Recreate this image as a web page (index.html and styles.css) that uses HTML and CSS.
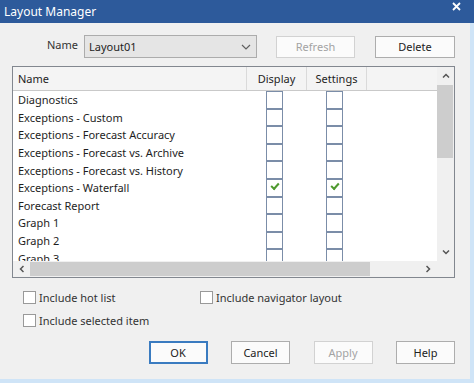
FILE: index.html
```html
<!DOCTYPE html>
<html lang="en">
<head>
    <meta charset="UTF-8">
    <title>Layout Manager</title>
    <link rel="stylesheet" href="styles.css">
</head>
<body>
    <div class="window">
        <div class="titlebar">
            <span class="title">Layout Manager</span>
            <svg class="close" width="9" height="9" viewBox="0 0 9 9">
                <path d="M1 1 L8 8 M8 1 L1 8" stroke="#fff" stroke-width="1.8"/>
            </svg>
        </div>
        <div class="content">
            <div class="top-row">
                <label class="name-label">Name</label>
                <div class="combo">
                    <span>Layout01</span>
                    <svg width="10" height="6" viewBox="0 0 10 6">
                        <path d="M1 1 L5 5 L9 1" fill="none" stroke="#606060" stroke-width="1.2"/>
                    </svg>
                </div>
                <button class="btn btn-refresh" disabled>Refresh</button>
                <button class="btn btn-delete">Delete</button>
            </div>

            <div class="list">
                <div class="list-view">
                    <div class="list-header">
                        <div class="col-name">Name</div>
                        <div class="col-check">Display</div>
                        <div class="col-check">Settings</div>
                        <div class="col-rest"></div>
                    </div>
                    <div class="row"><div class="col-name">Diagnostics</div><div class="col-check"><span class="box"></span></div><div class="col-check"><span class="box"></span></div></div>
                    <div class="row"><div class="col-name">Exceptions - Custom</div><div class="col-check"><span class="box"></span></div><div class="col-check"><span class="box"></span></div></div>
                    <div class="row"><div class="col-name">Exceptions - Forecast Accuracy</div><div class="col-check"><span class="box"></span></div><div class="col-check"><span class="box"></span></div></div>
                    <div class="row"><div class="col-name">Exceptions - Forecast vs. Archive</div><div class="col-check"><span class="box"></span></div><div class="col-check"><span class="box"></span></div></div>
                    <div class="row"><div class="col-name">Exceptions - Forecast vs. History</div><div class="col-check"><span class="box"></span></div><div class="col-check"><span class="box"></span></div></div>
                    <div class="row"><div class="col-name">Exceptions - Waterfall</div><div class="col-check"><span class="box checked"></span></div><div class="col-check"><span class="box checked"></span></div></div>
                    <div class="row"><div class="col-name">Forecast Report</div><div class="col-check"><span class="box"></span></div><div class="col-check"><span class="box"></span></div></div>
                    <div class="row"><div class="col-name">Graph 1</div><div class="col-check"><span class="box"></span></div><div class="col-check"><span class="box"></span></div></div>
                    <div class="row"><div class="col-name">Graph 2</div><div class="col-check"><span class="box"></span></div><div class="col-check"><span class="box"></span></div></div>
                    <div class="row"><div class="col-name">Graph 3</div><div class="col-check"><span class="box"></span></div><div class="col-check"><span class="box"></span></div></div>
                </div>
                <div class="vscroll">
                    <div class="arrow">
                        <svg width="8" height="5" viewBox="0 0 8 5"><path d="M1 4.5 L4 1.5 L7 4.5" fill="none" stroke="#555" stroke-width="1.5"/></svg>
                    </div>
                    <div class="vtrack"><div class="vthumb"></div></div>
                    <div class="arrow">
                        <svg width="8" height="5" viewBox="0 0 8 5"><path d="M1 0.5 L4 3.5 L7 0.5" fill="none" stroke="#555" stroke-width="1.5"/></svg>
                    </div>
                </div>
                <div class="hscroll">
                    <div class="arrow">
                        <svg width="5" height="8" viewBox="0 0 5 8"><path d="M4.5 1 L1.5 4 L4.5 7" fill="none" stroke="#555" stroke-width="1.5"/></svg>
                    </div>
                    <div class="htrack"><div class="hthumb"></div></div>
                    <div class="arrow">
                        <svg width="5" height="8" viewBox="0 0 5 8"><path d="M0.5 1 L3.5 4 L0.5 7" fill="none" stroke="#555" stroke-width="1.5"/></svg>
                    </div>
                </div>
                <div class="corner"></div>
            </div>

            <div class="options">
                <label class="option"><span class="small-box"></span>Include hot list</label>
                <label class="option"><span class="small-box"></span>Include navigator layout</label>
                <label class="option"><span class="small-box"></span>Include selected item</label>
            </div>

            <div class="buttons">
                <button class="btn btn-default">OK</button>
                <button class="btn">Cancel</button>
                <button class="btn" disabled>Apply</button>
                <button class="btn">Help</button>
            </div>
        </div>
    </div>
</body>
</html>
```

FILE: styles.css
```css
body {
    margin: 0;
    padding: 0;
    background-color: #cfe4f7;
    font-family: "Noto Sans", "Open Sans", sans-serif;
    font-size: 11px;
    color: #1e1e1e;
}

.window {
    width: 474px;
    height: 383px;
    display: flex;
    flex-direction: column;
}

.titlebar {
    height: 23px;
    background-color: #2d5a9b;
    display: flex;
    align-items: center;
    justify-content: space-between;
    padding: 0 13px 0 4px;
    flex-shrink: 0;
}

.title {
    color: #ffffff;
    font-size: 12px;
}

.close {
    align-self: flex-start;
    margin-top: 2px;
}

.content {
    flex: 1;
    background-color: #f0f0f0;
    margin: 0 4px 4px 0;
    padding: 12px 0 0 12px;
}

.top-row {
    display: flex;
    align-items: center;
    height: 23px;
}

.name-label {
    width: 72px;
    padding-right: 6px;
    box-sizing: border-box;
    text-align: right;
    color: #333;
    position: relative;
    top: -2px;
}

.combo {
    width: 173px;
    height: 23px;
    box-sizing: border-box;
    background-color: #e5e5e5;
    border: 1px solid #acacac;
    display: flex;
    align-items: center;
    justify-content: space-between;
    padding: 0 5px 0 4px;
    margin-right: 19px;
}

.btn {
    width: 59px;
    height: 23px;
    box-sizing: border-box;
    background-color: #fbfbfb;
    border: 1px solid #adadad;
    font-family: "Noto Sans", "Open Sans", sans-serif;
    font-size: 11px;
    color: #222;
    padding: 0;
}

.btn:disabled {
    border-color: #d2d2d2;
    color: #a3a3a3;
}

.btn-refresh {
    width: 79px;
    height: 22px;
    margin-right: 20px;
}

.btn-delete {
    width: 80px;
    height: 22px;
}

.btn-default {
    border: 1px solid #3a7bc0;
    box-shadow: inset 0 0 0 1px #3a7bc0;
}

.list {
    width: 443px;
    height: 212px;
    box-sizing: border-box;
    margin-top: 8px;
    border: 1px solid #82878f;
    background-color: #ffffff;
    display: grid;
    grid-template-columns: 1fr 17px;
    grid-template-rows: 1fr 16px;
}

.list-view {
    overflow: hidden;
}

.list-header {
    display: flex;
    height: 24px;
    box-sizing: border-box;
    background-color: #f4f4f4;
    border-bottom: 1px solid #c9c9c9;
}

.list-header > div {
    display: flex;
    align-items: center;
    border-right: 1px solid #dadada;
    box-sizing: border-box;
}

.list-header .col-check {
    justify-content: center;
}

.list-header .col-rest {
    flex: 1;
    border-right: none;
}

.col-name {
    width: 234px;
    padding-left: 5px;
    box-sizing: border-box;
    white-space: nowrap;
}

.col-check {
    width: 60px;
}

.row {
    display: flex;
    height: 17.6px;
    align-items: center;
}

.row .col-check {
    padding-left: 19px;
    box-sizing: border-box;
    height: 100%;
}

.box {
    display: block;
    width: 17px;
    height: 17.6px;
    box-sizing: border-box;
    border: 1.5px solid #7b8da8;
    background-color: #ffffff;
    position: relative;
}

.box.checked::after {
    content: "";
    position: absolute;
    left: 4px;
    top: 3px;
    width: 6px;
    height: 3px;
    border-left: 2px solid #4f9a2f;
    border-bottom: 2px solid #4f9a2f;
    transform: rotate(-48deg);
}

.vscroll {
    background-color: #f0f0f0;
    display: flex;
    flex-direction: column;
}

.vscroll .arrow {
    height: 17px;
    display: flex;
    align-items: center;
    justify-content: center;
}

.vtrack {
    flex: 1;
}

.vthumb {
    margin: 1px 1px 0 0;
    height: 73px;
    background-color: #cdcdcd;
}

.hscroll {
    background-color: #f0f0f0;
    display: flex;
}

.hscroll .arrow {
    width: 17px;
    display: flex;
    align-items: center;
    justify-content: center;
}

.htrack {
    flex: 1;
    padding-top: 1px;
}

.hthumb {
    width: 340px;
    height: 14px;
    background-color: #cdcdcd;
}

.corner {
    background-color: #f0f0f0;
}

.options {
    display: grid;
    grid-template-columns: 177px 1fr;
    row-gap: 10px;
    margin: 13px 0 0 11px;
}

.option {
    display: flex;
    align-items: center;
    color: #333;
    height: 13px;
}

.small-box {
    width: 13px;
    height: 13px;
    box-sizing: border-box;
    border: 1px solid #999;
    background-color: #ffffff;
    margin-right: 3px;
}

.buttons {
    display: flex;
    justify-content: flex-end;
    gap: 23.5px;
    width: 443px;
    margin-top: 14px;
}
```
